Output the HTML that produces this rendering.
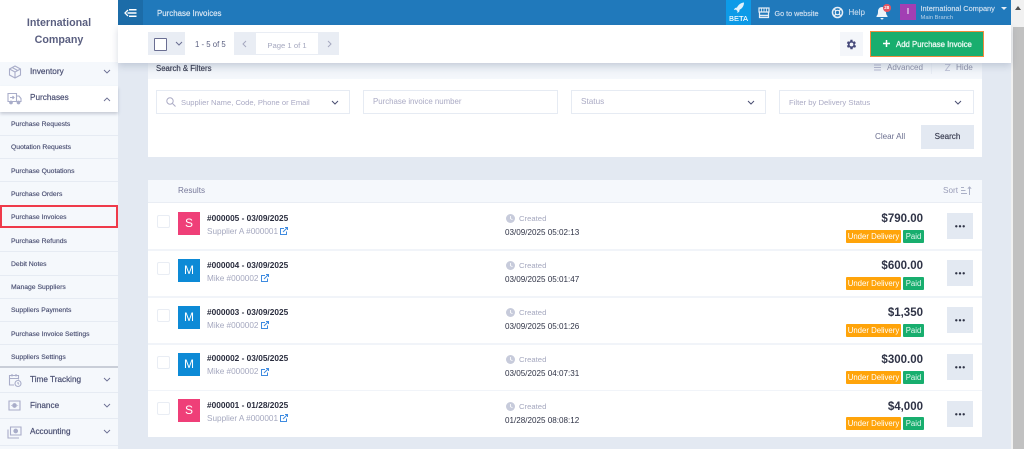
<!DOCTYPE html>
<html><head><meta charset="utf-8"><style>
html,body{margin:0;padding:0;width:1024px;height:449px;overflow:hidden;background:#e3e9f2;font-family:"Liberation Sans",sans-serif}
#w{position:absolute;left:0;top:0;width:1024px;height:449px;filter:blur(.35px)}
.a{position:absolute}
.t{position:absolute;white-space:nowrap;line-height:12px}
svg{position:absolute;overflow:visible}
.sub{left:11px;font-size:6.8px;color:#4a4f72;-webkit-text-stroke:.15px #4a4f72}
.line{position:absolute;left:0;width:118px;height:1px;background:#e6ebf3}
.mn{left:30px;font-size:8.2px;color:#4a4f72;-webkit-text-stroke:.2px #4a4f72}
.box{position:absolute;background:#fff;border:1px solid #e6ebf3;box-sizing:border-box;height:24px}
.ph{position:absolute;font-size:7.700px;color:#aaaac4;white-space:nowrap;line-height:12px}
.cb{position:absolute;left:157px;width:13px;height:13px;border:1px solid #e9edf4;border-radius:2px;box-sizing:border-box;background:#fff}
.av{position:absolute;left:178px;width:22px;height:23px;color:#fff;font-size:12px;line-height:23px;text-align:center}
.s{background:#ef3f78}.m{background:#0d8ad6}
.ti{left:207px;font-size:8.300px;font-weight:700;color:#2a2d3e}
.su{left:207px;font-size:8.200px;color:#a5a8bf}
.cr{left:519px;font-size:7.700px;color:#a5a8bf}
.dt{left:505px;font-size:8.100px;color:#2f3346}
.am{left:780px;width:143px;text-align:right;font-size:11.500px;font-weight:700;color:#2f3346}
.ud{position:absolute;left:846px;width:55px;height:13px;background:#ffa40a;color:#fff;font-size:7.800px;line-height:13px;text-align:center;border-radius:1px}
.pd{position:absolute;left:903px;width:21px;height:13px;background:#18ae6e;color:#e6f7ef;font-size:7.800px;line-height:13px;text-align:center;border-radius:1px}
.bt{position:absolute;left:947px;width:26px;height:26px;background:#e3e9f2}
.sep{position:absolute;left:148px;width:834px;height:2px;background:#f1f4f9}
</style></head><body><div id="w">
<!-- sidebar -->
<div class="a" style="left:0;top:0;width:118px;height:449px;background:#f5f8fc"></div>
<div class="a" style="left:0;top:0;width:118px;height:62px;background:#fff"></div>
<div class="t" style="left:0;width:118px;text-align:center;top:15px;font-size:10.700px;line-height:16.500px;font-weight:700;color:#5a5f80;white-space:normal">International<br>Company</div>

<svg style="left:8px;top:65px" width="14" height="14" viewBox="0 0 14 14" fill="none" stroke="#a9adc9" stroke-width="1.100"><path d="M7 1l5.500 3v6L7 13l-5.500-3V4zM1.500 4L7 7l5.500-3M7 7v6M4.200 2.500l5.500 3"/></svg>
<div class="t mn" style="top:66px">Inventory</div>
<svg style="left:103px;top:69px" width="8" height="5" fill="none" stroke="#6a6e92" stroke-width=".9"><path d="M1 1l3 3 3-3"/></svg>
<div class="a" style="left:0;top:86px;width:118px;height:26px;background:#fff;box-shadow:0 2px 3px rgba(60,70,100,.25)"></div>
<svg style="left:7px;top:92px" width="15" height="13" viewBox="0 0 15 13" fill="none" stroke="#a9adc9" stroke-width="1.100"><path d="M1 1.500h8.500v8H1zM9.500 4h2.500l2 2.500v3h-4.500z"/><circle cx="4" cy="10.500" r="1.300" fill="#a9adc9"/><circle cx="11.500" cy="10.500" r="1.300" fill="#a9adc9"/><path d="M3 5.500h4M5.500 4l1.500 1.500L5.500 7"/></svg>
<div class="t mn" style="top:92px">Purchases</div>
<svg style="left:103px;top:97px" width="8" height="5" fill="none" stroke="#6a6e92" stroke-width=".9"><path d="M1 4l3-3 3 3"/></svg>

<div class="t sub" style="top:119px">Purchase Requests</div><div class="line" style="top:135px"></div>
<div class="t sub" style="top:142px">Quotation Requests</div><div class="line" style="top:158px"></div>
<div class="t sub" style="top:166px">Purchase Quotations</div><div class="line" style="top:181px"></div>
<div class="t sub" style="top:189px">Purchase Orders</div>
<div class="a" style="left:0;top:205px;width:118px;height:23px;border:2px solid #ef3a4a;box-sizing:border-box"></div>
<div class="t sub" style="top:212px">Purchase Invoices</div>
<div class="t sub" style="top:236px">Purchase Refunds</div><div class="line" style="top:251px"></div>
<div class="t sub" style="top:259px">Debit Notes</div><div class="line" style="top:275px"></div>
<div class="t sub" style="top:282px">Manage Suppliers</div><div class="line" style="top:298px"></div>
<div class="t sub" style="top:305px">Suppliers Payments</div><div class="line" style="top:321px"></div>
<div class="t sub" style="top:329px">Purchase Invoice Settings</div><div class="line" style="top:344px"></div>
<div class="t sub" style="top:352px">Suppliers Settings</div>
<div class="a" style="left:0;top:366px;width:118px;height:2px;background:#c9ced8"></div>

<svg style="left:8px;top:373px" width="14" height="14" viewBox="0 0 14 14" fill="none" stroke="#a9adc9" stroke-width="1.100"><path d="M6 12H1.500V2.500h9v4M1.500 5.500h9M4 1v2.500M8 1v2.500"/><circle cx="10" cy="10.500" r="3"/><path d="M10 9v1.500l1 .8"/></svg>
<div class="t mn" style="top:374px">Time Tracking</div>
<svg style="left:103px;top:377px" width="8" height="5" fill="none" stroke="#6a6e92" stroke-width=".9"><path d="M1 1l3 3 3-3"/></svg>
<div class="line" style="top:392px"></div>
<svg style="left:8px;top:400px" width="13" height="11" viewBox="0 0 13 11" fill="none" stroke="#a9adc9" stroke-width="1.100"><path d="M1 1h11v9H1z"/><circle cx="6.500" cy="5.500" r="1.800" fill="#a9adc9"/><path d="M3 5.500h.6M9.500 5.500h.6"/></svg>
<div class="t mn" style="top:400px">Finance</div>
<svg style="left:103px;top:403px" width="8" height="5" fill="none" stroke="#6a6e92" stroke-width=".9"><path d="M1 1l3 3 3-3"/></svg>
<div class="line" style="top:418px"></div>
<svg style="left:7px;top:426px" width="15" height="13" viewBox="0 0 15 13" fill="none" stroke="#a9adc9" stroke-width="1.100"><path d="M3.500 1h10.500v8H3.500zM1 3.500V12h11"/><circle cx="8.700" cy="5" r="1.800" fill="#a9adc9"/></svg>
<div class="t mn" style="top:426px">Accounting</div>
<svg style="left:103px;top:429px" width="8" height="5" fill="none" stroke="#6a6e92" stroke-width=".9"><path d="M1 1l3 3 3-3"/></svg>
<div class="line" style="top:445px"></div>

<!-- top bar -->
<div class="a" style="left:118px;top:0;width:893px;height:25px;background:#2079bb"></div>
<div class="a" style="left:118px;top:0;width:25px;height:25px;background:#1c6ca8"></div>
<svg style="left:124px;top:9px" width="13" height="8" fill="none" stroke="#fff" stroke-width="1.500"><path d="M5 .7h7.500M3.500 4h9M5 7.300h7.500"/><path d="M4 1L1 4l3 3" stroke-width="1.300"/></svg>
<div class="t" style="left:157px;top:8px;font-size:7.900px;color:#dfeaf5;-webkit-text-stroke:.15px #dfeaf5">Purchase Invoices</div>

<div class="a" style="left:726px;top:0;width:25px;height:25px;background:#0d9be8"></div>
<svg style="left:733px;top:2px" width="12" height="12" viewBox="0 0 12 12" fill="#dff1fc"><path d="M11 .5C8 .8 5.500 2.500 4 5.500L2 6 .8 8l2.200-.4 1.500 1.500L4.200 11l2-1.200.4-2C9.500 6.300 11 3.500 11 .5z"/></svg>
<div class="t" style="left:726px;width:25px;text-align:center;top:12.500px;font-size:7.500px;color:#fff;-webkit-text-stroke:.1px #fff">BETA</div>

<svg style="left:758px;top:7px" width="12" height="12" viewBox="0 0 12 12" fill="none" stroke="#e6eef6" stroke-width="1.200"><path d="M1 1h10v4H1zM1.500 5v5.500h9V5"/><path d="M3.500 1v4M6 1v4M8.500 1v4" stroke-width=".8"/><path d="M1.500 8.500h9" stroke-width="1.500"/></svg>
<div class="t" style="left:774.500px;top:8px;font-size:7.200px;color:#c9dcee;-webkit-text-stroke:.2px #c9dcee">Go to website</div>
<svg style="left:831px;top:6px" width="13" height="13" viewBox="0 0 13 13" fill="none" stroke="#e6eef6"><circle cx="6.500" cy="6.500" r="5" stroke-width="1.500"/><circle cx="6.500" cy="6.500" r="2.200" stroke-width="1.200"/><path d="M3 3l2 2M10 3L8 5M3 10l2-2M10 10L8 8" stroke-width="1.300"/></svg>
<div class="t" style="left:848.500px;top:7px;font-size:8px;color:#c9dcee;-webkit-text-stroke:.1px #c9dcee">Help</div>
<svg style="left:876px;top:6px" width="12" height="14" viewBox="0 0 12 14" fill="#eef3f9"><path d="M6 1c-2.500 0-4 2-4 4.500 0 2.500-.5 3.500-1.500 4.500v1h11v-1c-1-1-1.500-2-1.500-4.500C10 3 8.500 1 6 1z"/><path d="M4.500 12h3c0 1-.6 1.500-1.500 1.500S4.500 13 4.500 12z"/></svg>
<div class="a" style="left:883px;top:4px;width:7.500px;height:7.500px;border-radius:50%;background:#e25563;color:#fff;font-size:4.500px;line-height:7.500px;text-align:center;font-weight:700">28</div>
<div class="a" style="left:900px;top:4px;width:16px;height:16px;background:#a23fb3;color:#e8d8ee;font-size:8px;line-height:16px;text-align:center;font-weight:700">I</div>
<div class="t" style="left:920.500px;top:3px;font-size:7.400px;color:#cfe0f0;-webkit-text-stroke:.15px #cfe0f0">International Company</div>
<div class="t" style="left:920.500px;top:12px;font-size:5.800px;color:#b9d2e8">Main Branch</div>
<div class="a" style="left:1001px;top:7px;width:0;height:0;border:3px solid transparent;border-top:3px solid #e6eef6"></div>

<!-- scrollbar -->
<div class="a" style="left:1011px;top:0;width:13px;height:449px;background:#f1f1f1"></div>
<div class="a" style="left:1013px;top:27px;width:11px;height:422px;background:#c1c1c1"></div>
<div class="a" style="left:1015px;top:6px;width:0;height:0;border:3.500px solid transparent;border-bottom:4px solid #505050;border-top:0"></div>

<!-- search card -->
<div class="a" style="left:148px;top:60px;width:834px;height:97px;background:#fff"></div>
<div class="a" style="left:148px;top:60px;width:834px;height:19px;background:linear-gradient(#e9edf4,#f5f8fc)"></div>
<div class="t" style="left:156px;top:63px;font-size:7.800px;color:#3d4155;-webkit-text-stroke:.2px #3d4155">Search &amp; Filters</div>
<svg style="left:874px;top:64px" width="7" height="7" fill="none" stroke="#b5b9cf" stroke-width="1"><path d="M0 1h7M0 3.500h7M0 6h7"/></svg>
<div class="t" style="left:887px;top:61.500px;font-size:8.100px;color:#8c90a8">Advanced</div>
<div class="a" style="left:931px;top:62px;width:1px;height:12px;background:#e6ebf3"></div>
<svg style="left:945px;top:64px" width="5" height="7" fill="none" stroke="#b5b9cf" stroke-width=".8"><path d="M0 .5h5L.5 6.500H5"/></svg>
<div class="t" style="left:956px;top:61.500px;font-size:8.200px;color:#8c90a8">Hide</div>

<div class="box" style="left:156px;top:90px;width:194px"></div>
<svg style="left:166px;top:97px" width="10" height="10" fill="none" stroke="#aaaac4" stroke-width="1"><circle cx="4" cy="4" r="3.200"/><path d="M6.500 6.500l3 3"/></svg>
<div class="ph" style="left:181px;top:96.500px;font-size:7.600px">Supplier Name, Code, Phone or Email</div>
<svg style="left:331px;top:100px" width="8" height="5" fill="none" stroke="#4a4f72" stroke-width="1"><path d="M1 1l3 3 3-3"/></svg>
<div class="box" style="left:363px;top:90px;width:195px"></div>
<div class="ph" style="left:373px;top:95.500px;font-size:7.850px">Purchase invoice number</div>
<div class="box" style="left:571px;top:90px;width:195px"></div>
<div class="ph" style="left:581px;top:95.500px;font-size:8.200px">Status</div>
<svg style="left:747px;top:100px" width="8" height="5" fill="none" stroke="#4a4f72" stroke-width="1"><path d="M1 1l3 3 3-3"/></svg>
<div class="box" style="left:779px;top:90px;width:195px"></div>
<div class="ph" style="left:789px;top:97px">Filter by Delivery Status</div>
<svg style="left:954px;top:100px" width="8" height="5" fill="none" stroke="#4a4f72" stroke-width="1"><path d="M1 1l3 3 3-3"/></svg>
<div class="t" style="left:875px;top:130.500px;font-size:8.100px;color:#6c7090">Clear All</div>
<div class="a" style="left:921px;top:125px;width:53px;height:24px;background:#e3e9f2;color:#3d4155;font-size:8.100px;line-height:24px;text-align:center;-webkit-text-stroke:.2px #3d4155">Search</div>

<!-- toolbar -->
<div class="a" style="left:118px;top:25px;width:893px;height:38px;background:#fff;box-shadow:0 3px 7px rgba(70,85,120,.22)"></div>
<div class="a" style="left:148px;top:32px;width:37px;height:23px;background:#e9edf4"></div>
<div class="a" style="left:154px;top:38px;width:11px;height:11px;background:#fff;border:1px solid #6a6e92;border-radius:1px"></div>
<svg style="left:175px;top:41px" width="8" height="5" fill="none" stroke="#6a6e92" stroke-width="1"><path d="M1 1l3 3 3-3"/></svg>
<div class="t" style="left:195px;top:39px;font-size:7.800px;color:#5a5f80">1 - 5 of 5</div>
<div class="a" style="left:234px;top:32px;width:22px;height:23px;background:#e9edf4"></div>
<div class="a" style="left:318px;top:32px;width:21px;height:23px;background:#e9edf4"></div>
<div class="a" style="left:256px;top:32px;width:62px;height:23px;background:#fff;color:#a5a8bf;font-size:7.700px;line-height:25px;text-align:center;border-top:1px solid #e9edf4;border-bottom:1px solid #e9edf4;box-sizing:border-box">Page 1 of 1</div>
<svg style="left:242px;top:40px" width="5" height="8" fill="none" stroke="#a5a8bf" stroke-width="1"><path d="M4 1L1 4l3 3"/></svg>
<svg style="left:327px;top:40px" width="5" height="8" fill="none" stroke="#a5a8bf" stroke-width="1"><path d="M1 1l3 3-3 3"/></svg>
<div class="a" style="left:840px;top:32px;width:23px;height:24px;background:#f4f6fa"></div>
<svg style="left:845px;top:37.500px" width="13" height="13" viewBox="0 0 24 24" fill="#45497a"><path d="M19.400 13a7.500 7.500 0 000-2l2.100-1.600-2-3.500-2.500 1a7.500 7.500 0 00-1.700-1L15.400 3.200h-4l-.4 2.700a7.500 7.500 0 00-1.700 1l-2.500-1-2 3.500L6.900 11a7.500 7.500 0 000 2l-2.100 1.600 2 3.500 2.500-1a7.500 7.500 0 001.700 1l.4 2.700h4l.4-2.700a7.500 7.500 0 001.700-1l2.500 1 2-3.500zM13.400 15.500a3.500 3.500 0 110-7 3.500 3.500 0 010 7z" transform="translate(-1.400 0)"/></svg>
<div class="a" style="left:870px;top:31px;width:114px;height:26px;background:#18ae6e;border:1px solid #f08a3c;box-sizing:border-box"></div>
<svg style="left:883px;top:40px" width="7" height="7" stroke="#fff" stroke-width="1.500"><path d="M3.500 0v7M0 3.500h7"/></svg>
<div class="t" style="left:896px;top:39px;font-size:7.800px;color:#e9f8f1;-webkit-text-stroke:.3px #e9f8f1">Add Purchase Invoice</div>

<!-- results -->
<div class="a" style="left:148px;top:180px;width:834px;height:257px;background:#fff"></div>
<div class="a" style="left:148px;top:180px;width:834px;height:23px;background:#f5f8fc;border-bottom:1px solid #e9edf4;box-sizing:border-box"></div>
<div class="t" style="left:178px;top:184.500px;font-size:8.100px;color:#77799a">Results</div>
<div class="t" style="left:943px;top:184.500px;font-size:8.200px;color:#9a9db8">Sort</div>
<svg style="left:961px;top:186px" width="10" height="9" fill="none" stroke="#aab0c6" stroke-width="1"><path d="M0 1.500h3M0 4.500h4.500M0 7.500h6M8.500 9V1M6.800 2.700L8.500 1l1.700 1.700"/></svg>

<div class="sep" style="top:249px"></div>
<div class="sep" style="top:296px"></div>
<div class="sep" style="top:343px"></div>
<div class="sep" style="top:390px;height:1px"></div>

<!-- row 1 -->
<div class="cb" style="top:215px"></div>
<div class="av s" style="top:212px">S</div>
<div class="t ti" style="top:211.500px">#000005 - 03/09/2025</div>
<div class="t su" style="top:225.500px">Supplier A #000001</div>
<svg style="left:280px;top:227px" width="8" height="8" fill="none" stroke="#3f8be0" stroke-width="1"><path d="M6.500 4.500v3H.5v-6H4M3 5l4.500-4.500M5 .5h2.500V3"/></svg>
<svg style="left:506px;top:214px" width="9" height="9"><circle cx="4.500" cy="4.500" r="4.500" fill="#c7cbdb"/><path d="M4.500 2v2.700l2 1" fill="none" stroke="#fff" stroke-width=".8"/></svg>
<div class="t cr" style="top:212.500px">Created</div>
<div class="t dt" style="top:227px">03/09/2025 05:02:13</div>
<div class="t am" style="top:213px">$790.00</div>
<div class="ud" style="top:230px">Under Delivery</div>
<div class="pd" style="top:230px">Paid</div>
<div class="bt" style="top:213px"></div>
<svg style="left:955px;top:225px" width="10" height="3" fill="#2f3346"><circle cx="1.300" cy="1.300" r="1.200"/><circle cx="5" cy="1.300" r="1.200"/><circle cx="8.700" cy="1.300" r="1.200"/></svg>

<!-- row 2 -->
<div class="cb" style="top:262px"></div>
<div class="av m" style="top:259px">M</div>
<div class="t ti" style="top:258.500px">#000004 - 03/09/2025</div>
<div class="t su" style="top:272.500px">Mike #000002</div>
<svg style="left:261px;top:274px" width="8" height="8" fill="none" stroke="#3f8be0" stroke-width="1"><path d="M6.500 4.500v3H.5v-6H4M3 5l4.500-4.500M5 .5h2.500V3"/></svg>
<svg style="left:506px;top:261px" width="9" height="9"><circle cx="4.500" cy="4.500" r="4.500" fill="#c7cbdb"/><path d="M4.500 2v2.700l2 1" fill="none" stroke="#fff" stroke-width=".8"/></svg>
<div class="t cr" style="top:259.500px">Created</div>
<div class="t dt" style="top:274px">03/09/2025 05:01:47</div>
<div class="t am" style="top:260px">$600.00</div>
<div class="ud" style="top:277px">Under Delivery</div>
<div class="pd" style="top:277px">Paid</div>
<div class="bt" style="top:260px"></div>
<svg style="left:955px;top:272px" width="10" height="3" fill="#2f3346"><circle cx="1.300" cy="1.300" r="1.200"/><circle cx="5" cy="1.300" r="1.200"/><circle cx="8.700" cy="1.300" r="1.200"/></svg>

<!-- row 3 -->
<div class="cb" style="top:309px"></div>
<div class="av m" style="top:306px">M</div>
<div class="t ti" style="top:305.500px">#000003 - 03/09/2025</div>
<div class="t su" style="top:319.500px">Mike #000002</div>
<svg style="left:261px;top:321px" width="8" height="8" fill="none" stroke="#3f8be0" stroke-width="1"><path d="M6.500 4.500v3H.5v-6H4M3 5l4.500-4.500M5 .5h2.500V3"/></svg>
<svg style="left:506px;top:308px" width="9" height="9"><circle cx="4.500" cy="4.500" r="4.500" fill="#c7cbdb"/><path d="M4.500 2v2.700l2 1" fill="none" stroke="#fff" stroke-width=".8"/></svg>
<div class="t cr" style="top:306.500px">Created</div>
<div class="t dt" style="top:321px">03/09/2025 05:01:26</div>
<div class="t am" style="top:307px">$1,350</div>
<div class="ud" style="top:324px">Under Delivery</div>
<div class="pd" style="top:324px">Paid</div>
<div class="bt" style="top:307px"></div>
<svg style="left:955px;top:319px" width="10" height="3" fill="#2f3346"><circle cx="1.300" cy="1.300" r="1.200"/><circle cx="5" cy="1.300" r="1.200"/><circle cx="8.700" cy="1.300" r="1.200"/></svg>

<!-- row 4 -->
<div class="cb" style="top:356px"></div>
<div class="av m" style="top:353px">M</div>
<div class="t ti" style="top:352px">#000002 - 03/05/2025</div>
<div class="t su" style="top:366px">Mike #000002</div>
<svg style="left:261px;top:368px" width="8" height="8" fill="none" stroke="#3f8be0" stroke-width="1"><path d="M6.500 4.500v3H.5v-6H4M3 5l4.500-4.500M5 .5h2.500V3"/></svg>
<svg style="left:506px;top:355px" width="9" height="9"><circle cx="4.500" cy="4.500" r="4.500" fill="#c7cbdb"/><path d="M4.500 2v2.700l2 1" fill="none" stroke="#fff" stroke-width=".8"/></svg>
<div class="t cr" style="top:353.500px">Created</div>
<div class="t dt" style="top:368px">03/05/2025 04:07:31</div>
<div class="t am" style="top:354px">$300.00</div>
<div class="ud" style="top:371px">Under Delivery</div>
<div class="pd" style="top:371px">Paid</div>
<div class="bt" style="top:354px"></div>
<svg style="left:955px;top:366px" width="10" height="3" fill="#2f3346"><circle cx="1.300" cy="1.300" r="1.200"/><circle cx="5" cy="1.300" r="1.200"/><circle cx="8.700" cy="1.300" r="1.200"/></svg>

<!-- row 5 -->
<div class="cb" style="top:402px"></div>
<div class="av s" style="top:399px">S</div>
<div class="t ti" style="top:399px">#000001 - 01/28/2025</div>
<div class="t su" style="top:413px">Supplier A #000001</div>
<svg style="left:280px;top:414px" width="8" height="8" fill="none" stroke="#3f8be0" stroke-width="1"><path d="M6.500 4.500v3H.5v-6H4M3 5l4.500-4.500M5 .5h2.500V3"/></svg>
<svg style="left:506px;top:402px" width="9" height="9"><circle cx="4.500" cy="4.500" r="4.500" fill="#c7cbdb"/><path d="M4.500 2v2.700l2 1" fill="none" stroke="#fff" stroke-width=".8"/></svg>
<div class="t cr" style="top:400.500px">Created</div>
<div class="t dt" style="top:415px">01/28/2025 08:08:12</div>
<div class="t am" style="top:401px">$4,000</div>
<div class="ud" style="top:417px">Under Delivery</div>
<div class="pd" style="top:417px">Paid</div>
<div class="bt" style="top:401px"></div>
<svg style="left:955px;top:413px" width="10" height="3" fill="#2f3346"><circle cx="1.300" cy="1.300" r="1.200"/><circle cx="5" cy="1.300" r="1.200"/><circle cx="8.700" cy="1.300" r="1.200"/></svg>
</div></body></html>
